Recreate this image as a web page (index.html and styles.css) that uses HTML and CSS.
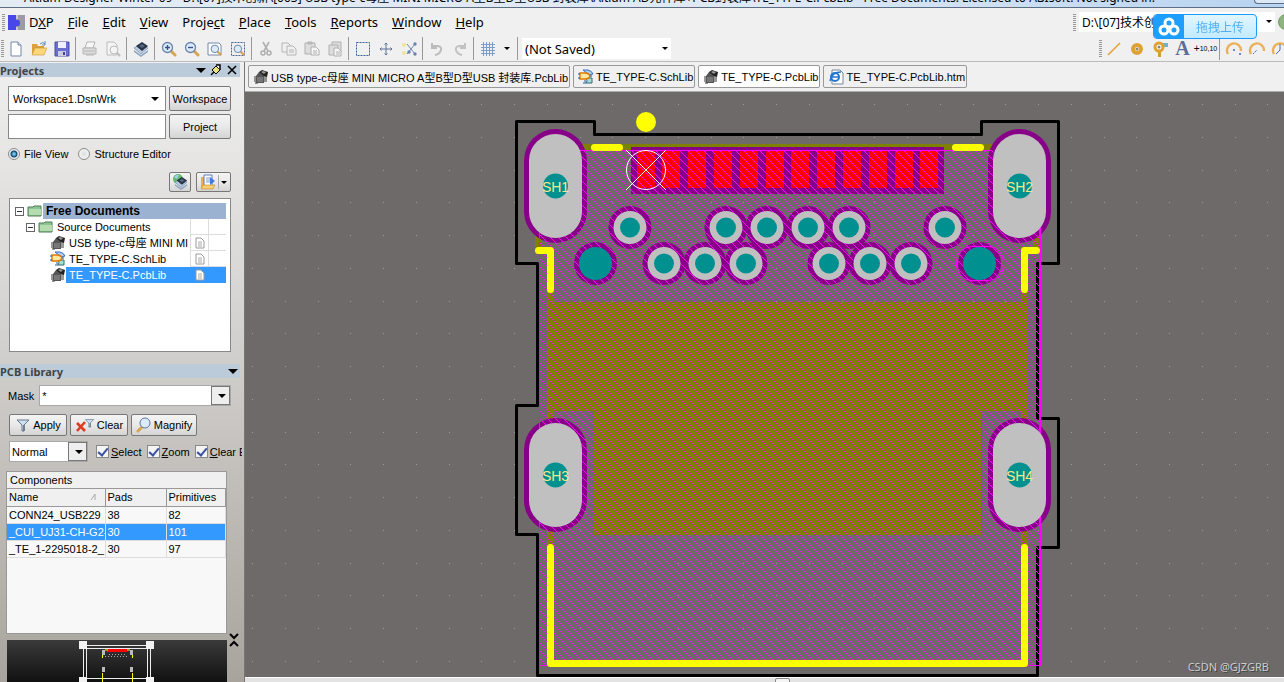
FILE: index.html
```html
<!DOCTYPE html>
<html lang="en">
<head>
    <meta charset="UTF-8">
    <meta name="viewport" content="width=device-width, initial-scale=1.0">
    <title>Altium Designer Winter 09</title>
    <link rel="stylesheet" href="styles.css">
</head>
<body>

<!-- Shared icons -->
<svg class="defs" aria-hidden="true">
    <symbol id="i-chip" viewBox="0 0 16 16">
        <path d="M1 8h3M1 10h3M1 12h3M2 14h3M11 8h3M11 10h3M11 12h3" stroke="#333"/>
        <path d="M3 7l3-4h7l-2 4v7H3z" fill="#555"/>
        <path d="M6 3l3-2 6 2-1 5-3-1z" fill="#222"/>
        <path d="M8 3l2-1 3 1-2 2z" fill="#999"/>
        <path d="M4 8h6v5H4z" fill="#777"/>
    </symbol>
    <symbol id="i-sch" viewBox="0 0 16 16">
        <path d="M5 1h5q4 1 5 4l-4 1z" fill="#a9cdf5" stroke="#3a6fc0"/>
        <path d="M8 9h6v5H8q2-2 0-5z" fill="#a8dcd8" stroke="#2f6c78"/>
        <path d="M2 4h5q4 0 5 3-1 3-5 3H2z" fill="#ffe9a0" stroke="#e07800" stroke-width="1.4"/>
        <path d="M0 5h2M0 9h2M12 7h2M6 12h2M5 14h3" stroke="#23579c"/>
    </symbol>
    <symbol id="i-layers" viewBox="0 0 16 16">
        <path d="M1 9l7 5 7-5v2l-7 5-7-5z" fill="#8ea7c4"/>
        <path d="M1 7l7-4 7 4-7 6z" fill="#b9cbe0" stroke="#667fa0" stroke-width=".6"/>
        <path d="M3 5l6-4 6 4-6 5z" fill="#273448"/>
        <path d="M6 5l3-2 3 2-3 2z" fill="#54687f"/>
    </symbol>
    <symbol id="i-folder" viewBox="0 0 16 16">
        <path d="M1 4h5l1-1h7v10H1z" fill="#8dc494" stroke="#4f7d57"/>
        <path d="M2 6h12v6H2z" fill="#b4dcae"/>
    </symbol>
    <symbol id="i-doc" viewBox="0 0 12 12">
        <path d="M2 1h5l3 3v7H2z" fill="#fff" stroke="#999"/>
        <path d="M4 5h4M4 7h4M4 9h4" stroke="#aaa"/>
    </symbol>
    <symbol id="i-lens" viewBox="0 0 16 16">
        <path d="M10 10l4 4" stroke="#d8a550" stroke-width="3" stroke-linecap="round"/>
        <circle cx="6.500" cy="6.500" r="5" fill="#dcebfa" stroke="#6b84ab" stroke-width="1.3"/>
    </symbol>
    <symbol id="i-funnel" viewBox="0 0 16 16">
        <path d="M2 3h12l-5 5v6H7V8z" fill="#cfe0f0" stroke="#66788c"/>
        <path d="M9 8v6" stroke="#405468"/>
    </symbol>
    <symbol id="i-arc" viewBox="0 0 18 16">
        <path d="M3 13A7 7 0 1 1 16 10" fill="none" stroke="#e9b25a" stroke-width="2.400"/>
    </symbol>
</svg>

<header>
    <div class="titlebar">
        <span>Altium Designer Winter 09 - D:\[07]技术创新\[003] USB type-c母座 MINI MICRO A型B型D型USB 封装库\Altium AD元件库+PCB封装库\TE_TYPE-C.PcbLib - Free Documents. Licensed to ABIsoft. Not signed in.</span>
        <i></i>
    </div>
    <div class="menubar">
        <i class="grip"></i>
        <svg class="logo" viewBox="0 0 17 15"><path d="M0 0h17v15H0z" fill="#9c9ca0"/><path d="M0 0h8v5q4-1 4 3t-4 3v4H0z" fill="#4848e8"/><path d="M8 0h2v4H8zM8 12h2v3H8z" fill="#c9c9d4"/></svg>
        <nav>
            <a href="#">D<u>X</u>P</a>
            <a href="#"><u>F</u>ile</a>
            <a href="#"><u>E</u>dit</a>
            <a href="#"><u>V</u>iew</a>
            <a href="#">Proje<u>c</u>t</a>
            <a href="#"><u>P</u>lace</a>
            <a href="#"><u>T</u>ools</a>
            <a href="#"><u>R</u>eports</a>
            <a href="#"><u>W</u>indow</a>
            <a href="#"><u>H</u>elp</a>
        </nav>
        <div class="address">
            <i class="grip"></i>
            <div class="select flat"><select aria-label="Document path"><option>D:\[07]技术创新\[003] USB -</option></select></div>
            <button class="go" aria-label="Go"></button>
            <button class="upload">
                <svg viewBox="0 0 30 24"><g fill="none" stroke="#fff" stroke-width="3"><circle cx="15" cy="8" r="4"/><circle cx="10" cy="15" r="4"/><circle cx="20" cy="15" r="4"/></g></svg>
                <span>拖拽上传</span>
            </button>
        </div>
    </div>
    <div class="toolbar">
        <i class="grip"></i>
        <button aria-label="New"><svg viewBox="0 0 16 16"><path d="M3 1h7l3 3v11H3z" fill="#fff" stroke="#7488a8"/><path d="M10 1v3h3" fill="#dde6f2" stroke="#7488a8"/></svg></button>
        <button aria-label="Open"><svg viewBox="0 0 16 16"><path d="M1 3h5l1 2h6v9H1z" fill="#dca03c"/><path d="M4 7h12l-3 7H1z" fill="#fbd77a" stroke="#c8963c" stroke-width=".6"/><path d="M9 3q3-3 5 0M14 0v4h-3" fill="none" stroke="#5f86b5"/></svg></button>
        <button aria-label="Save"><svg viewBox="0 0 16 16"><path d="M1 1h14v14H1z" fill="#6a6ed0" stroke="#4a4ea0"/><path d="M4 1h8v6H4z" fill="#eef"/><path d="M4 10h8v5H4z" fill="#ccd"/><path d="M9 11h2v3H9z" fill="#449"/></svg></button>
        <i class="sep"></i>
        <button aria-label="Print"><svg viewBox="0 0 16 16" stroke="#b4b4b4"><path d="M5 1h8l-2 6H3z" fill="#f8f8f8"/><path d="M1 7h13v6H1z" fill="#ddd"/><path d="M2 10h11M4 14h8"/></svg></button>
        <button aria-label="Preview"><svg viewBox="0 0 16 16" stroke="#bcbcbc" fill="#f4f4f4"><path d="M2 1h7l3 3v10H2z"/><circle cx="9" cy="9" r="4"/><path d="M12 12l3 3" stroke-width="2"/></svg></button>
        <i class="sep"></i>
        <button aria-label="Layers"><svg><use href="#i-layers"/></svg></button>
        <i class="sep"></i>
        <button aria-label="Zoom in"><svg viewBox="0 0 16 16"><use href="#i-lens"/><path d="M4 6.500h5M6.500 4v5" stroke="#35558c" stroke-width="1.400"/></svg></button>
        <button aria-label="Zoom out"><svg viewBox="0 0 16 16"><use href="#i-lens"/><path d="M4 6.500h5" stroke="#35558c" stroke-width="1.400"/></svg></button>
        <button aria-label="Fit document"><svg viewBox="0 0 16 16"><path d="M1 2h11l2 2v10H1z" fill="#fff" stroke="#7488a8"/><use href="#i-lens" x="3" y="3" width="12" height="12"/></svg></button>
        <button aria-label="Fit selection"><svg viewBox="0 0 16 16"><path d="M1.500 1.500h13v13h-13z" fill="none" stroke="#49628c" stroke-dasharray="2 1"/><use href="#i-lens" x="3" y="3" width="12" height="12"/></svg></button>
        <i class="sep"></i>
        <button aria-label="Cut"><svg viewBox="0 0 16 16" fill="none" stroke="#b0b0b0" stroke-width="1.600"><path d="M5 1l5 9M11 1l-5 9"/><circle cx="5" cy="12" r="2"/><circle cx="11" cy="12" r="2"/></svg></button>
        <button aria-label="Copy"><svg viewBox="0 0 16 16" fill="#f0f0f0" stroke="#b4b4b4"><path d="M1 2h6l2 2v7H1z"/><path d="M6 5h6l3 3v6H6zM8 9h5M8 11h5"/></svg></button>
        <button aria-label="Paste"><svg viewBox="0 0 16 16" fill="#ddd" stroke="#b0b0b0"><path d="M1 2h10v11H1zM4 1h4v2H4z"/><path d="M7 6h5l3 3v5H7zM9 10h4M9 12h4" fill="#f6f6f6"/></svg></button>
        <button aria-label="Paste special"><svg viewBox="0 0 16 16" fill="#ddd" stroke="#b0b0b0"><path d="M5 1h9v10H5z"/><path d="M2 4h9v10H2z"/><path d="M7 7h4l3 3v5H7zM9 11h4M9 13h4" fill="#f6f6f6"/></svg></button>
        <i class="sep"></i>
        <button aria-label="Select area"><svg viewBox="0 0 16 16"><path d="M1.500 1.500h13v13h-13z" fill="none" stroke="#3c5f94" stroke-dasharray="2 1"/></svg></button>
        <button aria-label="Move"><svg viewBox="0 0 16 16"><path d="M8 2v12M2 8h12M6.500 3.500L8 2l1.500 1.500M6.500 12.500L8 14l1.500-1.500M3.500 6.500L2 8l1.500 1.500M12.500 6.500L14 8l-1.500 1.500" fill="none" stroke="#5b7396"/></svg></button>
        <button aria-label="Clear selection"><svg viewBox="0 0 16 16"><path d="M6 3l4 5-4 5M10 8l4-5M10 8l4 5" fill="none" stroke="#6d87b0"/><g fill="#f1e58e"><circle cx="3" cy="4" r="2"/><circle cx="3" cy="12" r="2"/></g><g fill="#6783ab"><circle cx="14" cy="3" r="1.700"/><circle cx="8" cy="11" r="1.700"/><circle cx="14" cy="13" r="1.700"/></g></svg></button>
        <i class="sep"></i>
        <button aria-label="Undo"><svg viewBox="0 0 16 16"><path d="M3 5h6q4 1 3 4-1 4-6 5M3 2v5h5" fill="none" stroke="#bcbcbc" stroke-width="2"/></svg></button>
        <button aria-label="Redo"><svg viewBox="0 0 16 16"><path d="M13 5H7Q3 6 4 9q1 4 6 5M13 2v5H8" fill="none" stroke="#c2c2c2" stroke-width="2"/></svg></button>
        <i class="sep"></i>
        <button aria-label="Grid"><svg viewBox="0 0 16 16"><path d="M3.500 1v14M6.500 1v14M9.500 1v14M12.500 1v14M1 3.500h14M1 6.500h14M1 9.500h14M1 12.500h14" stroke="#7c9ccc"/></svg></button>
        <button class="narrow" aria-label="Grid menu"><i class="caret"></i></button>
        <i class="sep"></i>
        <div class="select flat saved"><select aria-label="Filter"><option>(Not Saved)</option></select></div>
        <div class="drawbar">
            <i class="grip"></i>
            <button aria-label="Line"><svg viewBox="0 0 16 16"><path d="M2 14L14 2" stroke="#e5a43a" stroke-width="1.600"/></svg></button>
            <button aria-label="Pad"><svg viewBox="0 0 16 16"><circle cx="8" cy="8" r="4" fill="#fff" stroke="#dfa133" stroke-width="4"/><circle cx="8" cy="8" r="1.500" fill="#887"/></svg></button>
            <button aria-label="Via"><svg viewBox="0 0 16 16"><path d="M9 2h7v4H9z" fill="#6bb4cc"/><path d="M6 9h3v7H6z" fill="#d79b34"/><circle cx="7" cy="6" r="4" fill="#fff" stroke="#dfa133" stroke-width="3"/><circle cx="7" cy="6" r="1.500" fill="#887"/></svg></button>
            <button aria-label="String" class="letter">A</button>
            <button aria-label="Coordinate" class="coord">+<sup>10,10</sup></button>
            <i class="sep"></i>
            <button aria-label="Arc by center"><svg viewBox="0 0 18 16"><use href="#i-arc"/><circle cx="9" cy="9" r="1" fill="#46c"/><circle cx="15" cy="13" r="1" fill="#46c"/></svg></button>
            <button aria-label="Arc by edge"><svg viewBox="0 0 18 16"><use href="#i-arc"/><path d="M5 13l4-4" stroke="#46c" stroke-dasharray="2 1"/></svg></button>
            <button aria-label="Arc any angle"><svg viewBox="0 0 18 16"><use href="#i-arc"/><path d="M9 3v6l-4 4" fill="none" stroke="#46c"/></svg></button>
        </div>
    </div>
</header>

<main>
    <aside>
        <section class="projects">
            <h2>Projects
                <span class="tools">
                    <i class="caret big"></i>
                    <svg viewBox="0 0 12 12"><path d="M1 11l3-3" stroke="#000" stroke-width="1.500"/><path d="M2 6l4-4 4 4-4 4z" fill="#eee27a" stroke="#000"/><path d="M6 1h4v5" fill="#fff" stroke="#000" stroke-width="1.500"/></svg>
                    <svg viewBox="0 0 12 12"><path d="M2 2l8 8M10 2l-8 8" stroke="#000" stroke-width="1.600"/></svg>
                </span>
            </h2>
            <div class="form">
                <div class="select"><select aria-label="Workspace file"><option>Workspace1.DsnWrk</option></select></div>
                <button>Workspace</button>
                <input type="text" aria-label="Project file">
                <button>Project</button>
            </div>
            <div class="views">
                <label><input type="radio" name="view" checked>File View</label>
                <label><input type="radio" name="view">Structure Editor</label>
            </div>
            <div class="actions">
                <button aria-label="Refresh"><svg viewBox="0 0 16 16"><circle cx="6" cy="5" r="5" fill="#65b96b"/><path d="M2 3q3-3 5-2L5 5z" fill="#9fd0ee"/><use href="#i-layers" x="2" y="2" width="14" height="14"/></svg></button>
                <button aria-label="Open project"><svg viewBox="0 0 16 16"><path d="M1 3h4v11H1z" fill="#e9b14a"/><path d="M4 1h8v11H4z" fill="#fff" stroke="#5c7cb0"/><path d="M6 4h4M6 6h4M6 8h4" stroke="#7d97c0"/><path d="M10 3l5 4-5 4z" fill="#3c7be0"/><path d="M3 11h12l-2 4H1z" fill="#f7cf70" stroke="#b98a2c" stroke-width=".6"/></svg><i class="split"></i><i class="caret"></i></button>
            </div>
            <ul class="tree">
                <li class="root"><i class="minus"></i><svg><use href="#i-folder"/></svg><b>Free Documents</b></li>
                <li class="group"><i class="minus"></i><svg><use href="#i-folder"/></svg><span>Source Documents</span><em></em><em></em></li>
                <li><svg><use href="#i-chip"/></svg><span>USB type-c母座 MINI MI</span><em><svg><use href="#i-doc"/></svg></em><em></em></li>
                <li><svg><use href="#i-sch"/></svg><span>TE_TYPE-C.SchLib</span><em><svg><use href="#i-doc"/></svg></em><em></em></li>
                <li class="on"><svg><use href="#i-chip"/></svg><span>TE_TYPE-C.PcbLib</span><em><svg><use href="#i-doc"/></svg></em><em></em></li>
            </ul>
        </section>

        <section class="library">
            <h2>PCB Library <span class="tools"><i class="caret big"></i></span></h2>
            <div class="mask">
                <label for="mask">Mask</label>
                <div class="select boxed"><select id="mask"><option>*</option></select></div>
            </div>
            <div class="buttons">
                <button><svg><use href="#i-funnel"/></svg>Apply</button>
                <button><svg class="wide" viewBox="0 0 20 16"><path d="M2 6l8 8M10 5l-8 9" stroke="#e03a20" stroke-width="2.600"/><use href="#i-funnel" x="9" y="0" width="11" height="12"/></svg>Clear</button>
                <button><svg viewBox="0 0 16 16"><path d="M6 10l-4 4" stroke="#d8a550" stroke-width="3" stroke-linecap="round"/><circle cx="9" cy="6" r="5" fill="#dcebfa" stroke="#5b74a0"/></svg>Magnify</button>
            </div>
            <div class="options">
                <div class="select boxed"><select aria-label="Mode"><option>Normal</option></select></div>
                <label><input type="checkbox" checked><span><u>S</u>elect</span></label>
                <label><input type="checkbox" checked><span><u>Z</u>oom</span></label>
                <label><input type="checkbox" checked><span><u>C</u>lear E</span></label>
            </div>
            <div class="components">
                <table>
                    <caption>Components</caption>
                    <thead>
                        <tr><th>Name <svg viewBox="0 0 8 8"><path d="M1 7l4-6v6" fill="none" stroke="#aaa"/></svg></th><th>Pads</th><th>Primitives</th></tr>
                    </thead>
                    <tbody>
                        <tr><td>CONN24_USB229</td><td>38</td><td>82</td></tr>
                        <tr class="on"><td>_CUI_UJ31-CH-G2-</td><td>30</td><td>101</td></tr>
                        <tr><td>_TE_1-2295018-2_</td><td>30</td><td>97</td></tr>
                    </tbody>
                </table>
            </div>
            <div class="preview">
                <svg viewBox="0 0 220 42">
                    <path d="M79.500 8.500h61v30h-61zM76.500 5.500h67v40h-67z" fill="none" stroke="#eee"/>
                    <path d="M72 1h8v8h-8zM139 1h8v8h-8zM72 37h8v8h-8zM139 37h8v8h-8z" fill="#f2f2f2"/>
                    <path d="M100 9h20v3h-20z" fill="#f00"/>
                    <path d="M98 10h3M120 10h3M95.500 14v4M125.500 14v4M95.500 33v9M125.500 33v9" stroke="#ff0"/>
                    <path d="M95 10h3v5h-3zM123 10h3v5h-3zM95 27h3v5h-3zM123 27h3v5h-3z" fill="#bbb"/>
                    <path d="M102 14.500h18M98 16.500h24" stroke="#aaa" stroke-dasharray="1 2"/>
                </svg>
                <svg class="fold" viewBox="0 0 10 14"><path d="M1 1l4 4 4-4M1 13l4-4 4 4" fill="none" stroke="#000" stroke-width="2"/></svg>
            </div>
        </section>
    </aside>

    <article>
        <div class="tabs">
            <button><svg><use href="#i-chip"/></svg>USB type-c母座 MINI MICRO A型B型D型USB 封装库.PcbLib</button>
            <button><svg><use href="#i-sch"/></svg>TE_TYPE-C.SchLib</button>
            <button class="on"><svg><use href="#i-chip"/></svg>TE_TYPE-C.PcbLib</button>
            <button><svg viewBox="0 0 16 16"><path d="M4 1h8l3 3v11H4z" fill="#fff" stroke="#789"/><circle cx="7" cy="8" r="4" fill="none" stroke="#2377d0" stroke-width="2"/><path d="M3 8h8M2 12q2-9 11-9" fill="none" stroke="#2377d0" stroke-width="1.500"/></svg>TE_TYPE-C.PcbLib.htm</button>
        </div>
        <div class="canvas">
            <svg class="board">
                <defs>
                    <pattern id="dots" x="252" y="137" width="131" height="131" patternUnits="userSpaceOnUse">
                        <path d="M0 0h1v1H0zM33 0h1v1h-1zM66 0h1v1h-1zM98 0h1v1h-1zM0 33h1v1H0zM33 33h1v1h-1zM66 33h1v1h-1zM98 33h1v1h-1zM0 65h1v1H0zM33 65h1v1h-1zM66 65h1v1h-1zM98 65h1v1h-1zM0 98h1v1H0zM33 98h1v1h-1zM66 98h1v1h-1zM98 98h1v1h-1z" fill="#999"/>
                    </pattern>
                    <pattern id="hatch" x="1" width="8" height="8" patternUnits="userSpaceOnUse">
                        <path d="M0 0h1v1H0zM1 1h1v1H1zM2 2h1v1H2zM3 3h1v1H3zM4 4h1v1H4zM5 5h1v1H5zM6 6h1v1H6zM7 7h1v1H7z" fill="#f0f"/>
                    </pattern>
                    <g id="mask-ring"><circle r="21.500" fill="#808"/></g>
                    <g id="pin"><circle r="16.500" fill="#c0c0c0"/><circle r="10" fill="#009090"/></g>
                    <g id="shield"><rect x="-26.500" y="-52" width="53" height="104" rx="26.500" fill="#c0c0c0"/><circle r="12.500" fill="#009090"/></g>
                    <rect id="shield-mask" x="-31.500" y="-57" width="63" height="114" rx="31.500" fill="#808"/>
                </defs>
                <g transform="translate(-245 -92)">
                    <rect x="245" y="92" width="4000" height="3000" fill="url(#dots)"/>

                    <!-- board outline -->
                    <path class="outline" d="M516.500 121.500H594.500V134.500H981.500V121.500H1058.500V263.500H1037.500V418.500H1058.500V547.500H1037.500V675.500H537.500V534.500H516.500V405.500H537.500V263.500H516.500Z"/>

                    <!-- keep-out layer -->
                    <path d="M580 144H996V151H580ZM535 236h7v12h-7zM1033 236h7v12h-7zM547 247H554V302H1021V247H1028V664H1021V411H981V535H594V411H554V664H547Z" fill="#808000"/>

                    <!-- solder mask -->
                    <rect x="631" y="147" width="313" height="47" fill="#808"/>
                    <use href="#shield-mask" x="555.500" y="186"/>
                    <use href="#shield-mask" x="1019.500" y="186"/>
                    <use href="#shield-mask" x="555.500" y="475"/>
                    <use href="#shield-mask" x="1019.500" y="475"/>
                    <use href="#mask-ring" x="630" y="227.500"/>
                    <use href="#mask-ring" x="726" y="227.500"/>
                    <use href="#mask-ring" x="767" y="227.500"/>
                    <use href="#mask-ring" x="808" y="227.500"/>
                    <use href="#mask-ring" x="849" y="227.500"/>
                    <use href="#mask-ring" x="945" y="227.500"/>
                    <use href="#mask-ring" x="595.500" y="263.500"/>
                    <use href="#mask-ring" x="664" y="263.500"/>
                    <use href="#mask-ring" x="705" y="263.500"/>
                    <use href="#mask-ring" x="746" y="263.500"/>
                    <use href="#mask-ring" x="829" y="263.500"/>
                    <use href="#mask-ring" x="870" y="263.500"/>
                    <use href="#mask-ring" x="911" y="263.500"/>
                    <use href="#mask-ring" x="979.500" y="263.500"/>

                    <!-- top pads -->
                    <path d="M637 151h18v37h-18zM662 151h18v37h-18zM688 151h18v37h-18zM714 151h18v37h-18zM740 151h18v37h-18zM766 151h18v37h-18zM791 151h18v37h-18zM817 151h18v37h-18zM843 151h18v37h-18zM869 151h18v37h-18zM895 151h18v37h-18zM920 151h18v37h-18z" fill="#f00"/>

                    <!-- mechanical layer -->
                    <path d="M580 150H1040V665H539V232H580Z" fill="url(#hatch)"/>
                    <path d="M580 150.500H992M539.500 232V665.500H1040.500" fill="none" stroke="#f0f"/>
                    <path d="M1040 227V666" stroke="#f0f" stroke-width="2"/>
                    <rect x="956.500" y="246.500" width="47" height="34" rx="15" fill="none" stroke="#f0f"/>

                    <!-- pins -->
                    <use href="#shield" x="555.500" y="186"/>
                    <use href="#shield" x="1019.500" y="186"/>
                    <use href="#shield" x="555.500" y="475"/>
                    <use href="#shield" x="1019.500" y="475"/>
                    <use href="#pin" x="630" y="227.500"/>
                    <use href="#pin" x="726" y="227.500"/>
                    <use href="#pin" x="767" y="227.500"/>
                    <use href="#pin" x="808" y="227.500"/>
                    <use href="#pin" x="849" y="227.500"/>
                    <use href="#pin" x="945" y="227.500"/>
                    <use href="#pin" x="664" y="263.500"/>
                    <use href="#pin" x="705" y="263.500"/>
                    <use href="#pin" x="746" y="263.500"/>
                    <use href="#pin" x="829" y="263.500"/>
                    <use href="#pin" x="870" y="263.500"/>
                    <use href="#pin" x="911" y="263.500"/>
                    <circle cx="595.500" cy="263.500" r="16.500" fill="#009090"/>
                    <circle cx="979.500" cy="263.500" r="16.500" fill="#009090"/>

                    <!-- silkscreen -->
                    <path class="silk" d="M594.500 147.500H619.500M955.500 147.500H980.500M538.500 250.500H550.500V289.500M1036.500 250.500H1024.500V289.500M550.500 547.500V663.500H1024.500V547.500"/>
                    <circle cx="646" cy="122" r="10" fill="#ff0"/>
                    <g fill="none" stroke="#fff">
                        <circle cx="646" cy="170" r="19.500"/>
                        <path d="M626 150l40 40M666 150l-40 40"/>
                    </g>
                    <g class="names">
                        <text x="555.500" y="192">SH1</text>
                        <text x="1019.500" y="192">SH2</text>
                        <text x="555.500" y="481">SH3</text>
                        <text x="1019.500" y="481">SH4</text>
                    </g>
                </g>
            </svg>
            <span class="watermark">CSDN @GJZGRB</span>
        </div>
        <div class="hscroll"><i></i></div>
    </article>
</main>
</body>
</html>
```
FILE: styles.css
```css
* {
    box-sizing: border-box;
}

body {
    margin: 0;
    height: 100vh;
    display: flex;
    flex-direction: column;
    overflow: hidden;
    background: #f0f0f0;
    color: #000;
    font-family: "Liberation Sans", "Noto Sans CJK SC", sans-serif;
    font-size: 11px;
}

.defs {
    position: absolute;
    width: 0;
    height: 0;
}

button, input, select {
    font: inherit;
    color: inherit;
    margin: 0;
}

i, em {
    flex: none;
}

/* Title, menu and toolbars */
.titlebar {
    height: 8px;
    display: flex;
    align-items: flex-end;
    overflow: hidden;
    padding-left: 4px;
    background: linear-gradient(90deg, #e3ebf3, #dfe9f4 60%, #b7d3f0);
    border-bottom: 1px solid #5b6e86;
    font-family: "Noto Sans", "Noto Sans CJK SC", sans-serif;
    font-size: 12px;
    line-height: 16px;
    white-space: nowrap;
}

.titlebar span {
    padding: 0 0 1px 20px;
}

.titlebar i {
    align-self: flex-start;
    width: 30px;
    height: 4px;
    margin-left: auto;
    border: 1px solid #5b6e86;
    border-width: 0 0 1px 1px;
    border-radius: 0 0 0 4px;
    background: #dce8f4;
}

.menubar {
    height: 28px;
    display: flex;
    align-items: center;
    padding-left: 2px;
    font-family: "Noto Sans", "Noto Sans CJK SC", sans-serif;
    font-size: 13px;
}

.grip {
    width: 3px;
    height: 17px;
    background: repeating-linear-gradient(#999 0 1px, #f0f0f0 1px 2px);
}

.logo {
    width: 17px;
    height: 15px;
    margin: 0 4px 0 3px;
}

nav {
    display: flex;
    gap: 14px;
}

nav a {
    color: #000;
    text-decoration: none;
}

.address {
    position: relative;
    display: flex;
    align-items: center;
    gap: 3px;
    width: 211px;
    margin-left: auto;
    overflow: hidden;
}

.address .select {
    width: 196px;
    height: 20px;
    flex: none;
}

.go {
    width: 18px;
    height: 16px;
    flex: none;
    padding: 0;
    border: 1px solid #779a6a;
    border-radius: 8px;
    background: #8db37e;
}

.upload {
    position: fixed;
    top: 14px;
    right: 27px;
    width: 104px;
    height: 25px;
    display: flex;
    align-items: center;
    padding: 0;
    border: 1px solid #1b9aff;
    border-radius: 4px;
    overflow: hidden;
    background: linear-gradient(#e2f6ff, #c2eaff);
    color: #4fb0f8;
    font-size: 12px;
}

.upload svg {
    width: 30px;
    height: 24px;
    background: #1e9fff;
}

.upload span {
    flex: 1;
}

.toolbar {
    height: 26px;
    display: flex;
    align-items: center;
    padding-left: 1px;
    border-bottom: 1px solid #bbb;
}

.toolbar button {
    width: 23px;
    height: 23px;
    flex: none;
    display: flex;
    align-items: center;
    justify-content: center;
    padding: 0;
    border: 0;
    background: none;
}

.toolbar svg {
    width: 16px;
    height: 16px;
}

.toolbar .narrow {
    width: 16px;
}

.sep {
    width: 1px;
    height: 23px;
    margin: 0 2px;
    background: #999;
}

.caret {
    border: 3px solid transparent;
    border-top-color: #000;
    border-bottom: 0;
}

.caret.big {
    border-width: 5px;
    border-bottom: 0;
}

.drawbar {
    display: flex;
    align-items: center;
    width: 185px;
    margin-left: auto;
    overflow: hidden;
}

.drawbar svg {
    width: 18px;
}

.toolbar .letter {
    font-family: "Liberation Serif", serif;
    font-size: 20px;
    font-weight: bold;
    color: #5c6f98;
}

.toolbar .coord {
    font-size: 10px;
}

.coord sup {
    font-size: 7px;
}

/* Drop-downs */
.select {
    position: relative;
    background: #fff;
    border: 1px solid #888;
}

.select select {
    appearance: none;
    width: 100%;
    height: 100%;
    padding: 0 18px 0 4px;
    border: 0;
    background: none;
}

.select::after {
    content: "";
    position: absolute;
    right: 6px;
    top: 50%;
    margin-top: -2px;
    border: 4px solid transparent;
    border-top-color: #000;
    border-bottom: 0;
    pointer-events: none;
}

.select.flat {
    border: 0;
    font-size: 12px;
    font-family: "Noto Sans", "Noto Sans CJK SC", sans-serif;
}

.select.flat::after {
    right: 3px;
    border-width: 3px;
    border-bottom: 0;
}

.select.flat select {
    padding: 0 12px 0 3px;
}

.toolbar .saved {
    width: 149px;
    height: 21px;
    margin-left: 2px;
    font-size: 13px;
}

.select.boxed {
    border-color: #a8a8a8;
}

.select.boxed::before {
    content: "";
    position: absolute;
    right: 0;
    top: 0;
    bottom: 0;
    width: 17px;
    border: 1px solid #777;
    background: #eee;
    pointer-events: none;
}

.select.boxed::after {
    right: 4px;
}

.select.boxed select {
    padding-left: 2px;
}

/* Side panels */
main {
    flex: 1;
    min-height: 0;
    display: flex;
}

aside {
    width: 245px;
    flex: none;
    display: flex;
    flex-direction: column;
    overflow: hidden;
    padding-top: 1px;
    border-right: 1px solid #777;
    background: linear-gradient(#f0f0f0, #cfcdca 50%, #a8a49d);
}

h2 {
    display: flex;
    align-items: center;
    height: 14px;
    margin: 0 4px 0 0;
    background: #bccbda;
    color: #444;
    font-family: "Noto Sans", sans-serif;
    font-size: 11px;
    font-weight: bold;
}

.tools {
    display: flex;
    align-items: center;
    gap: 4px;
    margin-left: auto;
    padding-right: 2px;
}

.tools svg {
    width: 12px;
    height: 12px;
}

aside button {
    display: flex;
    align-items: center;
    justify-content: center;
    padding: 0;
    border: 1px solid #777;
    border-radius: 2px;
    background: linear-gradient(#f4f4f4, #e9e9e9 50%, #d4d4d4);
}

aside svg {
    width: 16px;
    height: 16px;
    flex: none;
}

.projects {
    height: 301px;
}

.form {
    display: grid;
    grid-template-columns: 158px 62px;
    grid-auto-rows: 25px;
    gap: 3px;
    padding: 9px 8px 0;
}

.form input {
    border: 1px solid #888;
}

.views {
    display: flex;
    gap: 10px;
    height: 29px;
    padding-left: 8px;
}

.views label, .options label {
    display: flex;
    align-items: center;
    white-space: nowrap;
}

.views input {
    appearance: none;
    width: 12px;
    height: 12px;
    margin-right: 4px;
    border: 1px solid #8a8a8a;
    border-radius: 50%;
    background: radial-gradient(#ddd, #fff);
}

.views input:checked {
    background: radial-gradient(circle, #6cc4f0 1px, #12405f 3px, #e8eef2 4px);
}

.actions {
    display: flex;
    justify-content: flex-end;
    gap: 5px;
    margin: 4px 13px 6px 0;
}

.actions button {
    width: 22px;
    height: 20px;
}

.actions button + button {
    width: 35px;
    gap: 2px;
}

.split {
    width: 1px;
    height: 14px;
    background: #aaa;
}

.tree {
    list-style: none;
    width: 222px;
    height: 154px;
    margin: 0 0 0 9px;
    padding: 4px 4px 0 4px;
    border: 1px solid #888;
    background: #fff;
}

.tree li {
    display: flex;
    align-items: center;
    height: 16px;
    padding-left: 36px;
    line-height: 16px;
    white-space: nowrap;
}

.tree .root {
    padding-left: 1px;
}

.tree .group {
    padding-left: 12px;
}

.tree b, .tree span {
    flex: 1;
    height: 16px;
    overflow: hidden;
    padding-left: 3px;
}

.tree b {
    background: #9bb3d0;
    font-size: 12px;
}

.tree em {
    display: flex;
    align-items: center;
    justify-content: center;
    width: 18px;
    height: 16px;
    border: 1px solid #ddd;
    border-width: 0 0 1px 1px;
}

.tree em svg {
    width: 12px;
    height: 12px;
}

.tree .on span, .tree .on em {
    background: #3399ff;
    border-color: #3399ff;
    color: #fff;
}

.minus {
    width: 9px;
    height: 9px;
    margin-right: 3px;
    border: 1px solid #666;
    background: linear-gradient(#333, #333) center / 5px 1px no-repeat;
}

.library {
    flex: 1;
    min-height: 0;
    display: flex;
    flex-direction: column;
}

.mask {
    display: flex;
    align-items: center;
    gap: 5px;
    padding: 7px 13px 8px 8px;
}

.mask .select {
    flex: 1;
    height: 21px;
}

.buttons {
    display: flex;
    gap: 3px;
    padding-left: 9px;
}

.buttons button {
    width: 58px;
    height: 22px;
    gap: 2px;
}

.buttons button:last-child {
    width: 66px;
}

.buttons .wide {
    width: 20px;
}

.options {
    display: flex;
    gap: 5px;
    margin: 5px 2px 9px 9px;
    overflow: hidden;
}

.options .select {
    width: 79px;
    height: 21px;
    flex: none;
    margin-right: 3px;
}

.options input {
    appearance: none;
    width: 13px;
    height: 13px;
    margin-right: 2px;
    border: 1px solid #888;
    background: #f4f4f4;
}

.options input:checked::after {
    content: "";
    display: block;
    width: 4px;
    height: 8px;
    margin: 0 0 0 3px;
    border: solid #3a52a0;
    border-width: 0 2px 2px 0;
    transform: rotate(40deg);
}

.components {
    width: 221px;
    height: 163px;
    flex: none;
    margin-left: 6px;
    border: 1px solid #999;
    background: #f8f8f8;
}

table {
    width: 100%;
    table-layout: fixed;
    border-collapse: collapse;
}

caption {
    height: 17px;
    padding-left: 3px;
    border-bottom: 1px solid #999;
    background: #f0f0f0;
    line-height: 17px;
    text-align: left;
}

th, td {
    height: 17px;
    padding: 0 0 0 2px;
    overflow: hidden;
    border-right: 1px solid #ddd;
    border-bottom: 1px solid #ddd;
    font-weight: normal;
    line-height: 16px;
    text-align: left;
    white-space: nowrap;
}

th {
    border-color: #999;
    background: #f0f0f0;
}

th:first-child {
    width: 98px;
}

th:nth-child(2) {
    width: 61px;
}

th svg {
    float: right;
    width: 8px;
    height: 8px;
    margin: 4px 7px 0 0;
}

.components .on {
    background: #3399ff;
    color: #fff;
}

.preview {
    position: relative;
    width: 220px;
    flex: 1;
    min-height: 42px;
    margin: 6px 0 0 7px;
    background: linear-gradient(#3a3a3a, #111);
}

.preview svg {
    display: block;
    width: 220px;
    height: 42px;
}

.preview .fold {
    position: absolute;
    left: 222px;
    top: -7px;
    width: 10px;
    height: 14px;
}

/* Document area */
article {
    flex: 1;
    min-width: 0;
    display: flex;
    flex-direction: column;
}

.tabs {
    display: flex;
    align-items: center;
    gap: 3px;
    height: 30px;
    flex: none;
    padding-left: 3px;
    border-bottom: 1px solid #aaa;
}

.tabs button {
    display: flex;
    align-items: center;
    gap: 2px;
    height: 23px;
    padding: 0 1px 0 4px;
    border: 1px solid #999;
    border-radius: 2px;
    background: #f0f0f0;
    white-space: nowrap;
}

.tabs .on {
    background: #fff;
}

.tabs svg {
    width: 16px;
    height: 16px;
}

.canvas {
    position: relative;
    flex: 1;
    min-height: 0;
    background: #6e6a69;
}

.board {
    display: block;
    width: 100%;
    height: 100%;
}

.outline {
    fill: none;
    stroke: #000;
    stroke-width: 3px;
    stroke-linejoin: round;
}

.silk {
    fill: none;
    stroke: #ff0;
    stroke-width: 7px;
    stroke-linecap: round;
    stroke-linejoin: round;
}

.names {
    fill: #ffe68c;
    font-size: 14px;
    text-anchor: middle;
}

.watermark {
    position: absolute;
    right: 15px;
    bottom: 3px;
    color: #ccc;
    font-family: "Noto Sans", sans-serif;
    font-size: 11px;
    text-shadow: 1px 1px #444;
}

.hscroll {
    height: 5px;
    flex: none;
    padding-left: 530px;
    overflow: hidden;
    border-top: 1px solid #fff;
    background: #e3e3e3;
}

.hscroll i {
    display: block;
    width: 15px;
    height: 8px;
    border: 1px solid #888;
    border-radius: 2px;
    background: #f5f5f5;
}
```
